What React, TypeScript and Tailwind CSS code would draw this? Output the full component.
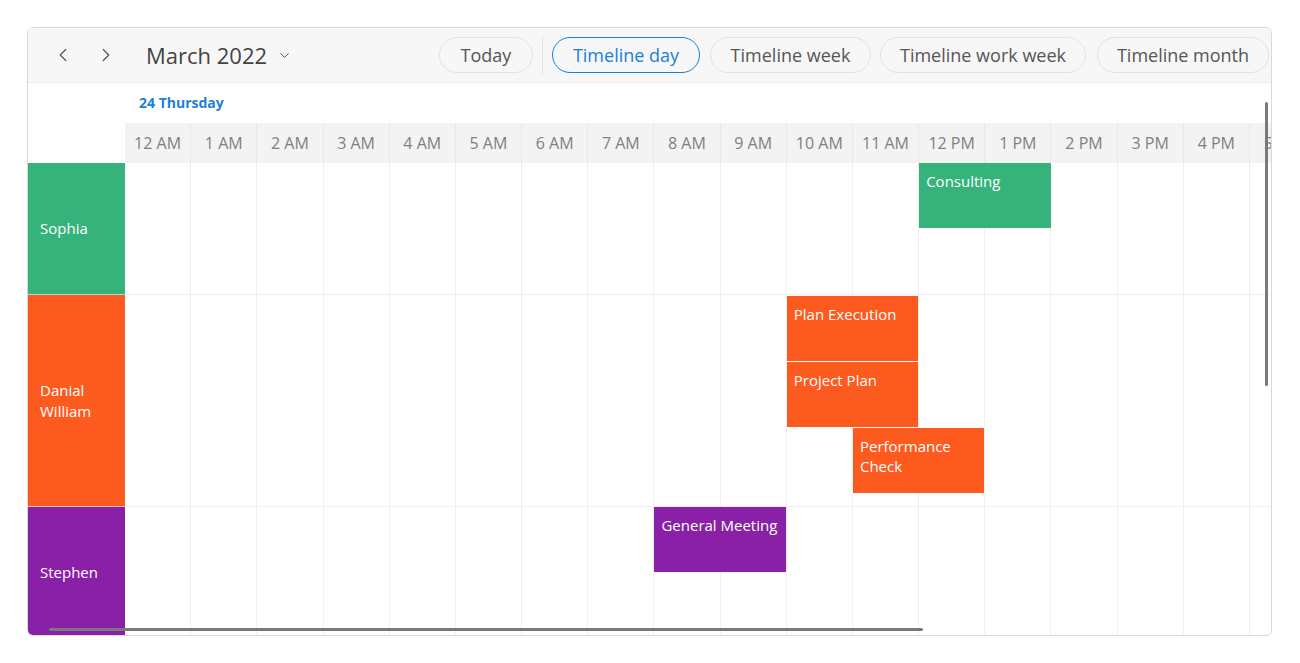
import { ChevronLeft, ChevronRight, ChevronDown } from 'lucide-react'

const CELL = 66.18

const hours = [
  '12 AM', '1 AM', '2 AM', '3 AM', '4 AM', '5 AM', '6 AM', '7 AM', '8 AM', '9 AM', '10 AM', '11 AM',
  '12 PM', '1 PM', '2 PM', '3 PM', '4 PM', '5 PM',
]

type Appt = { title: string; start: number; span: number; top: number }

const resources: { name: string; color: string; height: number; appts: Appt[] }[] = [
  {
    name: 'Sophia',
    color: 'bg-[#36b37b]',
    height: 132,
    appts: [{ title: 'Consulting', start: 12, span: 2, top: 0 }],
  },
  {
    name: 'Danial William',
    color: 'bg-[#fd5a1f]',
    height: 212,
    appts: [
      { title: 'Plan Execution', start: 10, span: 2, top: 1 },
      { title: 'Project Plan', start: 10, span: 2, top: 67 },
      { title: 'Performance Check', start: 11, span: 2, top: 133 },
    ],
  },
  {
    name: 'Stephen',
    color: 'bg-[#8a1fa8]',
    height: 132,
    appts: [{ title: 'General Meeting', start: 8, span: 2, top: 0 }],
  },
]

const views = [
  { label: 'Timeline day', w: 'w-[148px]', gap: 'ml-[9px]' },
  { label: 'Timeline week', w: 'w-[161px]', gap: 'ml-[10px]' },
  { label: 'Timeline work week', w: 'w-[206px]', gap: 'ml-[9px]' },
  { label: 'Timeline month', w: 'w-[172px]', gap: 'ml-[11px]' },
]

function Toolbar() {
  return (
    <div className="flex h-[55px] shrink-0 items-center bg-[#f7f7f7] border-b border-[#ededed]">
      <div className="flex items-center pl-[24px]">
        <ChevronLeft className="h-[22px] w-[22px] text-[#555]" strokeWidth={1.3} />
        <ChevronRight className="ml-[21px] h-[22px] w-[22px] text-[#555]" strokeWidth={1.3} />
        <span className="ml-[29px] text-[22px] text-[#444] leading-none">March 2022</span>
        <ChevronDown className="ml-[10px] h-[15px] w-[15px] text-[#555]" strokeWidth={1.6} />
      </div>
      <div className="ml-auto flex items-center pr-[2px]">
        <button className="h-[36px] w-[94px] rounded-full border border-[#e3e3e3] text-[18px] text-[#555]">
          Today
        </button>
        <div className="ml-[9px] h-[38px] w-px bg-[#e2e2e2]" />
        {views.map((v) => (
          <button
            key={v.label}
            className={
              v.label === 'Timeline day'
                ? `${v.w} ${v.gap} h-[36px] rounded-full border-[1.5px] border-[#1b80d8] text-[18px] text-[#1b80d8]`
                : `${v.w} ${v.gap} h-[36px] rounded-full border border-[#e3e3e3] text-[18px] text-[#555]`
            }
          >
            {v.label}
          </button>
        ))}
      </div>
    </div>
  )
}

function GridLines() {
  return (
    <div className="absolute inset-0 flex">
      {hours.map((h) => (
        <div key={h} className="h-full shrink-0 border-r border-[#efefef]" style={{ width: CELL }} />
      ))}
    </div>
  )
}

export default function App() {
  return (
    <div className="min-h-[663px] bg-white pl-[27px] pt-[27px]" style={{ fontFamily: '"Open Sans", "Noto Sans", sans-serif' }}>
      <div className="relative flex h-[609px] w-[1245px] flex-col overflow-hidden rounded-[6px] border border-[#d9d9d9]">
        <Toolbar />
        <div className="flex min-h-0 flex-1">
          {/* resource column */}
          <div className="flex w-[97px] shrink-0 flex-col">
            <div className="h-[80px] shrink-0 bg-white" />
            {resources.map((r) => (
              <div
                key={r.name}
                className={`${r.color} flex shrink-0 items-center border-b border-white/60 pl-[12px] pr-2 text-[15px] leading-[21px] text-white`}
                style={{ height: r.height }}
              >
                <span className={r.name === 'Danial William' ? 'w-[60px]' : ''}>{r.name}</span>
              </div>
            ))}
          </div>
          {/* timeline */}
          <div className="min-w-0 flex-1 overflow-hidden">
            <div className="flex h-[40px] items-center pl-[14px] pb-[2px] text-[14px] font-bold text-[#1b80d8]">
              24 Thursday
            </div>
            <div className="flex h-[40px] w-max bg-[#f3f3f3]">
              {hours.map((h) => (
                <div
                  key={h}
                  className="flex shrink-0 items-center justify-center border-r border-[#e8e8e8] text-[16px] text-[#808080]"
                  style={{ width: CELL }}
                >
                  {h}
                </div>
              ))}
            </div>
            {resources.map((r) => (
              <div
                key={r.name}
                className="relative border-b border-[#efefef]"
                style={{ height: r.height, width: CELL * hours.length }}
              >
                <GridLines />
                {r.appts.map((a) => (
                  <div
                    key={a.title}
                    className={`${r.color} absolute px-[7px] pt-[8px] text-[15px] leading-[20px] text-white`}
                    style={{ left: a.start * CELL, top: a.top, width: a.span * CELL - 1, height: 65 }}
                  >
                    {a.title}
                  </div>
                ))}
              </div>
            ))}
          </div>
        </div>
        {/* scrollbars */}
        <div className="absolute right-[3px] top-[74px] h-[284px] w-[3px] rounded-full bg-[#7a7a7a]" />
        <div className="absolute bottom-[4px] left-[21px] h-[3px] w-[874px] rounded-full bg-[#7a7a7a]" />
      </div>
    </div>
  )
}
